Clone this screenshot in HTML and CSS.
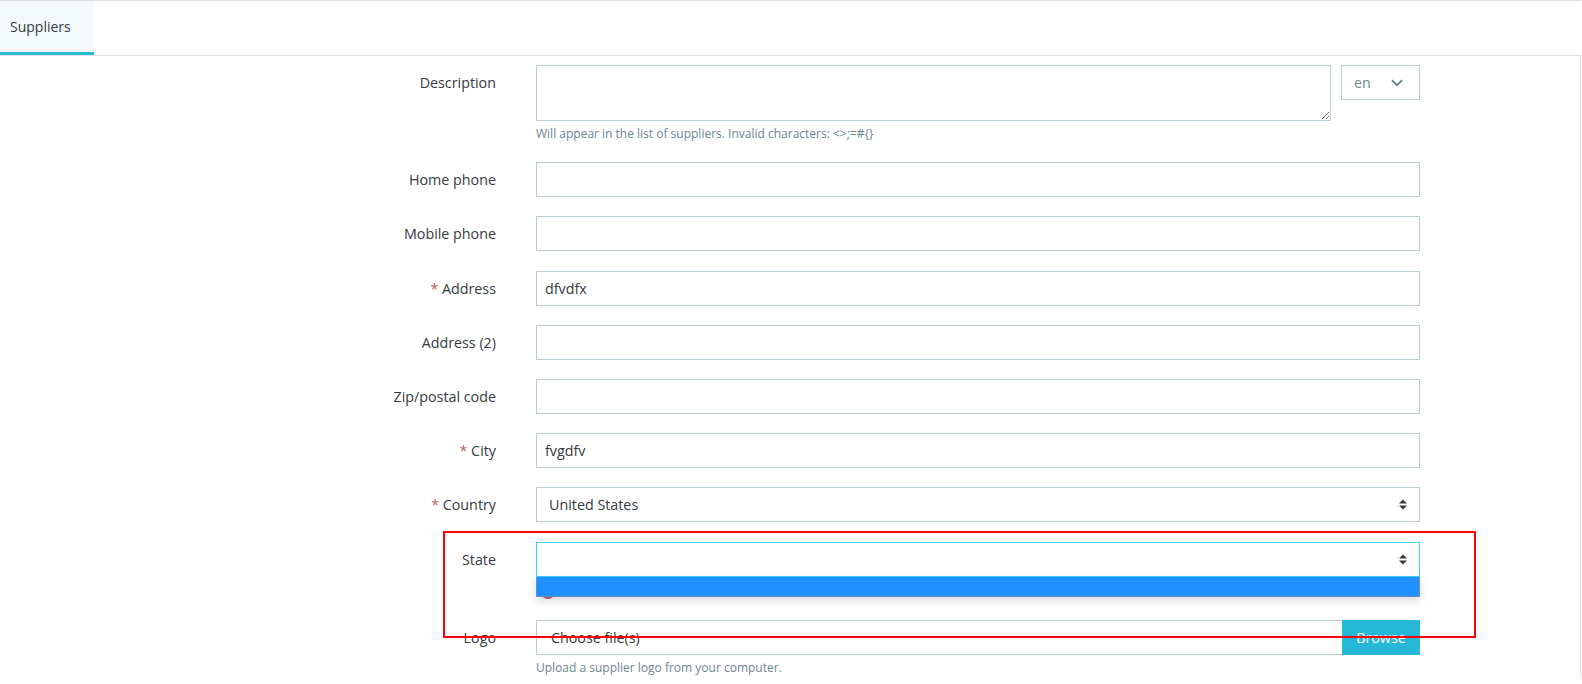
FILE: index.html
```html
<!DOCTYPE html>
<html lang="en">
<head>
    <meta charset="UTF-8">
    <meta name="viewport" content="width=device-width, initial-scale=1.0">
    <title>Suppliers</title>
    <link rel="stylesheet" href="styles.css">
</head>
<body>
<div class="tabs">
    <a class="tab active" href="#">Suppliers</a>
</div>

<div class="panel">
    <form class="supplier-form">
        <div class="form-row">
            <label class="form-label" for="description">Description</label>
            <div class="form-field">
                <div class="lang-group">
                    <textarea id="description"></textarea>
                    <button type="button" class="lang-btn">en
                        <svg width="12" height="8" viewBox="0 0 12 8"><path d="M1 1.2 L6 6.2 L11 1.2" fill="none" stroke="#6c868e" stroke-width="2"/></svg>
                    </button>
                </div>
                <small class="help">Will appear in the list of suppliers. Invalid characters: &lt;&gt;;=#{}</small>
            </div>
        </div>

        <div class="form-row">
            <label class="form-label" for="phone">Home phone</label>
            <div class="form-field"><input type="text" id="phone"></div>
        </div>

        <div class="form-row">
            <label class="form-label" for="mobile">Mobile phone</label>
            <div class="form-field"><input type="text" id="mobile"></div>
        </div>

        <div class="form-row">
            <label class="form-label" for="address"><span class="req">*</span> Address</label>
            <div class="form-field"><input type="text" id="address" value="dfvdfx"></div>
        </div>

        <div class="form-row">
            <label class="form-label" for="address2">Address (2)</label>
            <div class="form-field"><input type="text" id="address2"></div>
        </div>

        <div class="form-row">
            <label class="form-label" for="zip">Zip/postal code</label>
            <div class="form-field"><input type="text" id="zip"></div>
        </div>

        <div class="form-row">
            <label class="form-label" for="city"><span class="req">*</span> City</label>
            <div class="form-field"><input type="text" id="city" value="fvgdfv"></div>
        </div>

        <div class="form-row">
            <label class="form-label" for="country"><span class="req">*</span> Country</label>
            <div class="form-field">
                <div class="select-wrap">
                    <select id="country"><option>United States</option></select>
                    <svg class="sort-icon" width="8" height="11" viewBox="0 0 8 11"><path d="M4 0.5 L8 4.5 L0 4.5 Z M0 6.5 L8 6.5 L4 10.5 Z" fill="#363a41"/></svg>
                </div>
            </div>
        </div>

        <div class="form-row">
            <label class="form-label" for="state">State</label>
            <div class="form-field">
                <div class="select-wrap focused">
                    <select id="state"><option></option></select>
                    <svg class="sort-icon" width="8" height="11" viewBox="0 0 8 11"><path d="M4 0.5 L8 4.5 L0 4.5 Z M0 6.5 L8 6.5 L4 10.5 Z" fill="#363a41"/></svg>
                    <div class="dropdown-list"></div>
                </div>
                <div class="field-error"><span class="error-dot"></span></div>
            </div>
        </div>

        <div class="form-row">
            <label class="form-label">Logo</label>
            <div class="form-field">
                <div class="file-group">
                    <span class="file-name">Choose file(s)</span>
                    <button type="button" class="browse-btn">Browse</button>
                </div>
                <small class="help">Upload a supplier logo from your computer.</small>
            </div>
        </div>
    </form>
</div>

<div class="annotation"></div>
</body>
</html>
```

FILE: styles.css
```css
html, body {
    height: 684px;
    overflow: hidden;
}
body {
    margin: 0;
    font-family: "Open Sans", "Noto Sans", sans-serif;
    font-size: 14px;
    color: #363a41;
    background: #fff;
}
.tabs {
    display: flex;
    border-top: 1px solid #dfdfdf;
    border-bottom: 1px solid #dfdfdf;
    margin-right: 1px;
}
.tab {
    display: block;
    width: 84px;
    height: 51px;
    line-height: 51px;
    padding-left: 10px;
    background: #f4f9fb;
    border-bottom: 3px solid #25b9d7;
    color: #363a41;
    text-decoration: none;
}
.panel {
    margin-right: 1px;
    height: 620px;
    border-right: 1px solid #dfdfdf;
    padding-top: 9px;
    box-sizing: border-box;
}
.form-row {
    display: grid;
    grid-template-columns: 496px 884px;
    column-gap: 40px;
    margin-bottom: 19.2px;
}
.form-label {
    text-align: right;
    padding-top: 8px;
    line-height: 19px;
    font-size: 14.3px;
}
.req {
    color: #c05c67;
}
input, select, textarea {
    font-family: inherit;
    font-size: 14.3px;
    color: #363a41;
    border: 1px solid #bbcdd2;
    border-radius: 0;
    background: #fff;
    box-sizing: border-box;
    outline: none;
}
input {
    display: block;
    width: 100%;
    height: 35px;
    padding: 0 8px;
}
.lang-group {
    display: flex;
    align-items: flex-start;
}
textarea {
    display: block;
    width: 795px;
    height: 56px;
    padding: 6px 8px;
}
.lang-btn {
    margin-left: 10px;
    width: 79px;
    height: 35px;
    border: 1px solid #bbcdd2;
    background: #fff;
    font-family: inherit;
    font-size: 14.3px;
    color: #6c868e;
    display: flex;
    align-items: center;
    justify-content: space-between;
    padding: 0 16px 0 12px;
    box-sizing: border-box;
}
.help {
    display: block;
    margin-top: 3px;
    font-size: 12px;
    line-height: 19px;
    color: #6c868e;
}
.select-wrap {
    position: relative;
}
select {
    display: block;
    width: 100%;
    height: 35px;
    padding: 0 12px;
    appearance: none;
    -webkit-appearance: none;
}
.select-wrap.focused select {
    border-color: #3fd0ee;
}
.sort-icon {
    position: absolute;
    right: 13px;
    top: 12px;
}
.dropdown-list {
    position: absolute;
    left: 0;
    top: 100%;
    width: 100%;
    height: 20px;
    background: #1e90ff;
    border: 1px solid #7088c8;
    border-top: none;
    box-sizing: border-box;
    box-shadow: 0 4px 10px rgba(0, 0, 0, 0.15);
    z-index: 2;
}
.field-error {
    height: 24px;
    position: relative;
}
.error-dot {
    position: absolute;
    left: 5px;
    top: 8px;
    width: 14px;
    height: 14px;
    border-radius: 50%;
    background: #c05c67;
}
.file-group {
    display: flex;
    height: 35px;
    border: 1px solid #bbcdd2;
    box-sizing: border-box;
}
.file-name {
    flex: 1;
    line-height: 33px;
    padding-left: 14px;
    font-size: 14.3px;
}
.browse-btn {
    width: 78px;
    margin: -1px -1px -1px 0;
    border: none;
    background: #25b9d7;
    color: #fff;
    font-family: inherit;
    font-size: 14.3px;
}
.annotation {
    position: absolute;
    left: 443px;
    top: 531px;
    width: 1033px;
    height: 107px;
    border: 2px solid #ff0000;
    box-sizing: border-box;
    z-index: 5;
}
```
